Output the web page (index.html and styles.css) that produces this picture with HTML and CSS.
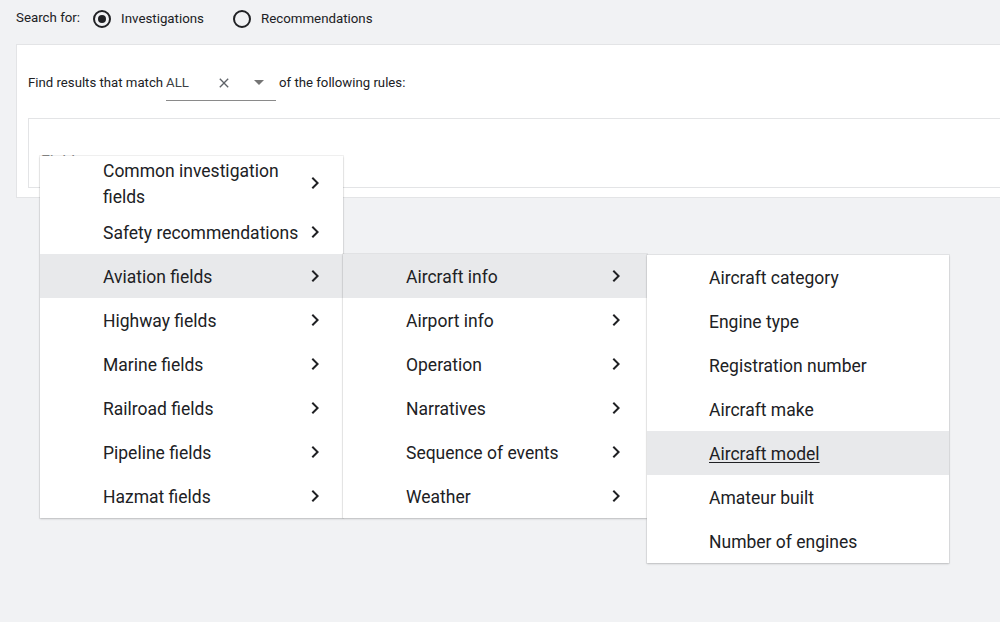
FILE: index.html
```html
<!DOCTYPE html>
<html lang="en">
  <head>
    <meta charset="UTF-8" />
    <title>Search</title>
    <link rel="stylesheet" href="styles.css">
  </head>
  <body>
    <!-- Search type -->
    <div class="search-for">
      <span class="search-label">Search for:</span>
      <label class="radio checked"><span class="radio-dot"></span>Investigations</label>
      <label class="radio"><span class="radio-dot"></span>Recommendations</label>
    </div>

    <!-- Rule card -->
    <div class="card">
      <div class="match-row">
        <span>Find results that match</span>
        <div class="match-select">
          <span class="match-value">ALL</span>
          <svg class="clear-icon" width="16" height="16" viewBox="0 0 24 24"><path d="M19 6.41 17.59 5 12 10.59 6.41 5 5 6.41 10.59 12 5 17.59 6.41 19 12 13.41 17.59 19 19 17.59 13.41 12z" fill="#5f6368"/></svg>
          <svg class="arrow-icon" width="10" height="5" viewBox="0 0 10 5"><path d="M0 0h10L5 5z" fill="#757575"/></svg>
        </div>
        <span>of the following rules:</span>
      </div>
      <div class="rule-box">
        <span class="field-label">Fields</span>
      </div>
    </div>

    <!-- Cascading field menu -->
    <div class="menu menu-root">
      <div class="menu-item"><span class="item-text">Common investigation fields</span><svg class="chev" viewBox="0 0 24 24"><path d="M10 6 8.59 7.41 13.17 12l-4.58 4.59L10 18l6-6z"/></svg></div>
      <div class="menu-item"><span class="item-text">Safety recommendations</span><svg class="chev" viewBox="0 0 24 24"><path d="M10 6 8.59 7.41 13.17 12l-4.58 4.59L10 18l6-6z"/></svg></div>
      <div class="menu-item active"><span class="item-text">Aviation fields</span><svg class="chev" viewBox="0 0 24 24"><path d="M10 6 8.59 7.41 13.17 12l-4.58 4.59L10 18l6-6z"/></svg></div>
      <div class="menu-item"><span class="item-text">Highway fields</span><svg class="chev" viewBox="0 0 24 24"><path d="M10 6 8.59 7.41 13.17 12l-4.58 4.59L10 18l6-6z"/></svg></div>
      <div class="menu-item"><span class="item-text">Marine fields</span><svg class="chev" viewBox="0 0 24 24"><path d="M10 6 8.59 7.41 13.17 12l-4.58 4.59L10 18l6-6z"/></svg></div>
      <div class="menu-item"><span class="item-text">Railroad fields</span><svg class="chev" viewBox="0 0 24 24"><path d="M10 6 8.59 7.41 13.17 12l-4.58 4.59L10 18l6-6z"/></svg></div>
      <div class="menu-item"><span class="item-text">Pipeline fields</span><svg class="chev" viewBox="0 0 24 24"><path d="M10 6 8.59 7.41 13.17 12l-4.58 4.59L10 18l6-6z"/></svg></div>
      <div class="menu-item"><span class="item-text">Hazmat fields</span><svg class="chev" viewBox="0 0 24 24"><path d="M10 6 8.59 7.41 13.17 12l-4.58 4.59L10 18l6-6z"/></svg></div>
    </div>

    <div class="menu menu-aviation">
      <div class="menu-item active"><span class="item-text">Aircraft info</span><svg class="chev" viewBox="0 0 24 24"><path d="M10 6 8.59 7.41 13.17 12l-4.58 4.59L10 18l6-6z"/></svg></div>
      <div class="menu-item"><span class="item-text">Airport info</span><svg class="chev" viewBox="0 0 24 24"><path d="M10 6 8.59 7.41 13.17 12l-4.58 4.59L10 18l6-6z"/></svg></div>
      <div class="menu-item"><span class="item-text">Operation</span><svg class="chev" viewBox="0 0 24 24"><path d="M10 6 8.59 7.41 13.17 12l-4.58 4.59L10 18l6-6z"/></svg></div>
      <div class="menu-item"><span class="item-text">Narratives</span><svg class="chev" viewBox="0 0 24 24"><path d="M10 6 8.59 7.41 13.17 12l-4.58 4.59L10 18l6-6z"/></svg></div>
      <div class="menu-item"><span class="item-text">Sequence of events</span><svg class="chev" viewBox="0 0 24 24"><path d="M10 6 8.59 7.41 13.17 12l-4.58 4.59L10 18l6-6z"/></svg></div>
      <div class="menu-item"><span class="item-text">Weather</span><svg class="chev" viewBox="0 0 24 24"><path d="M10 6 8.59 7.41 13.17 12l-4.58 4.59L10 18l6-6z"/></svg></div>
    </div>

    <div class="menu menu-aircraft">
      <div class="menu-item"><span class="item-text">Aircraft category</span></div>
      <div class="menu-item"><span class="item-text">Engine type</span></div>
      <div class="menu-item"><span class="item-text">Registration number</span></div>
      <div class="menu-item"><span class="item-text">Aircraft make</span></div>
      <div class="menu-item active hovered"><span class="item-text">Aircraft model</span></div>
      <div class="menu-item"><span class="item-text">Amateur built</span></div>
      <div class="menu-item"><span class="item-text">Number of engines</span></div>
    </div>
  </body>
</html>
```

FILE: styles.css
```css
/* Global Styles */
body {
  margin: 0;
  padding: 0;
  background: #f1f2f4;
  font-family: Roboto, "Liberation Sans", sans-serif;
  color: #202124;
  overflow: hidden;
  height: 622px;
}

/* Search type row */
.search-for {
  display: flex;
  align-items: center;
  height: 37px;
  padding-left: 16px;
  font-size: 13.3px;
}

.search-label {
  margin-right: 13px;
  position: relative;
  top: -1px;
}

.radio {
  display: flex;
  align-items: center;
  margin-right: 29px;
}

.radio-dot {
  width: 14px;
  height: 14px;
  border: 2px solid #202124;
  border-radius: 50%;
  margin-right: 10px;
  box-sizing: content-box;
  position: relative;
}

.radio.checked .radio-dot::after {
  content: "";
  position: absolute;
  left: 3px;
  top: 3px;
  width: 8px;
  height: 8px;
  border-radius: 50%;
  background: #202124;
}

/* Rule card */
.card {
  margin: 7px -40px 0 16px;
  height: 152px;
  background: #fff;
  border: 1px solid #e3e4e6;
  padding: 0 0 0 11px;
}

.match-row {
  display: flex;
  align-items: center;
  height: 74px;
  font-size: 13.2px;
}

.match-select {
  display: flex;
  align-items: center;
  width: 110px;
  height: 32px;
  margin: 6px 3px 0 3px;
  border-bottom: 1px solid #8a8a8a;
  box-sizing: border-box;
  padding-bottom: 4px;
}

.match-value {
  flex: 0 0 50px;
  color: #3c4043;
}

.clear-icon {
  margin-right: 22px;
}

.rule-box {
  margin-top: -1px;
  height: 68px;
  border: 1px solid #e3e4e6;
  border-right: none;
  padding-left: 12px;
}

.field-label {
  display: block;
  margin-top: 33px;
  font-size: 16px;
  color: #8a8a8a;
}

/* Cascading menus */
.menu {
  position: absolute;
  background: #fff;
  box-shadow: 0 1px 2px rgba(0, 0, 0, 0.18), 0 0 0 1px rgba(0, 0, 0, 0.05);
}

.menu-root {
  left: 40px;
  top: 156px;
  width: 303px;
}

.menu-aviation {
  left: 343px;
  top: 254px;
  width: 304px;
}

.menu-aircraft {
  left: 647px;
  top: 255px;
  width: 302px;
}

.menu-item {
  display: flex;
  align-items: center;
  min-height: 44px;
  padding: 1px 16px 1px 63px;
  box-sizing: border-box;
  font-size: 17.5px;
  line-height: 26px;
}

.menu-aircraft .menu-item {
  padding-left: 62px;
}

.menu-aviation .menu-item {
  padding-right: 19px;
}

.menu-item.active {
  background: #e8e9eb;
}

.menu-item.hovered .item-text {
  text-decoration: underline;
  text-underline-offset: 2px;
}

.item-text {
  flex: 1;
  position: relative;
  top: 1px;
}

.chev {
  width: 24px;
  height: 24px;
  flex: 0 0 24px;
  fill: #202124;
}
```
